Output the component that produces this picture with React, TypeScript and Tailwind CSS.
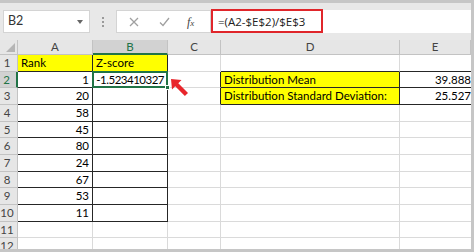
import React from 'react';

const GRID = 'border-[#dadada]';
const DARK = 'border-[#262626]';

type Row = {
  a?: string;
  b?: string;
  d?: string;
  e?: string;
};

const rows: Row[] = [
  { a: 'Rank', b: 'Z-score' },
  { a: '1', b: '-1.523410327', d: 'Distribution Mean', e: '39.888' },
  { a: '20', d: 'Distribution Standard Deviation:', e: '25.527' },
  { a: '58' },
  { a: '45' },
  { a: '80' },
  { a: '24' },
  { a: '67' },
  { a: '53' },
  { a: '11' },
  {},
  {},
];

const ColHeader = ({ label, active }: { label: string; active?: boolean }) => (
  <div
    className={
      active
        ? 'flex items-center justify-center border-r border-b-2 border-r-[#c3c3c3] border-b-[#217346] bg-[#d2d2d2] text-[#217346]'
        : 'flex items-center justify-center border-r border-b border-[#c3c3c3] bg-[#e6e6e6] text-[#444]'
    }
  >
    {label}
  </div>
);

const FormulaBar = () => (
  <div className="flex h-[37px] items-start bg-[#e8e8e8] pt-[7px]">
    <div className="ml-[3px] flex h-[23px] w-[87px] items-center justify-between border border-[#d4d4d4] bg-white pl-[4px] pr-[6px] text-[12.5px] text-[#333]">
      <span>B2</span>
      <span className="mt-[1px] h-0 w-0 border-x-[3.5px] border-t-[4px] border-x-transparent border-t-[#666]" />
    </div>
    <div className="flex h-[23px] w-[26px] flex-col items-center justify-center gap-[2px]">
      <span className="h-[2px] w-[2px] bg-[#9a9a9a]" />
      <span className="h-[2px] w-[2px] bg-[#9a9a9a]" />
      <span className="h-[2px] w-[2px] bg-[#9a9a9a]" />
    </div>
    <div className="flex h-[23px] w-[95px] items-center border border-[#d4d4d4] bg-white">
      <svg className="ml-[12px]" width="10" height="10" viewBox="0 0 10 10">
        <path d="M1 1 L9 9 M9 1 L1 9" stroke="#a0a0a0" strokeWidth="1.3" />
      </svg>
      <svg className="ml-[20px]" width="11" height="10" viewBox="0 0 11 10">
        <path d="M1 5.5 L4 8.5 L10 1" stroke="#a0a0a0" strokeWidth="1.3" fill="none" />
      </svg>
      <span className="ml-[17px] font-['Liberation_Serif'] text-[12px] italic text-[#444]">
        f<span className="text-[9px]">x</span>
      </span>
    </div>
    <div className="relative flex h-[23px] flex-1 items-center bg-white">
      <div className="absolute left-0 top-[-1px] h-[24px] w-[112px] border-2 border-[#e0262b]" />
      <span className="pl-[7px] font-['Open_Sans'] text-[11.5px] text-[#222]">=(A2-$E$2)/$E$3</span>
    </div>
  </div>
);

const Cell = ({
  children,
  className,
}: {
  children?: React.ReactNode;
  className: string;
}) => <div className={className}>{children}</div>;

export default function App() {
  return (
    <div className="flex h-[252px] w-[474px] overflow-hidden bg-[#c6c6c6] font-['Lato'] text-[11.5px] leading-none">
      <div className="flex w-[471px] flex-col">
        <div className="h-[3px] bg-[#c6c6c6]" />
        <FormulaBar />
        <div className="relative h-[209px] overflow-hidden bg-white">
          <div className="grid grid-cols-[18px_75px_75px_53px_179px_71px] grid-rows-[15px_repeat(12,16.667px)]">
            <div className="relative border-r border-b border-[#c3c3c3] bg-[#e6e6e6]">
              <svg className="absolute bottom-[2px] right-[2px]" width="9" height="9" viewBox="0 0 9 9">
                <path d="M9 0 L9 9 L0 9 Z" fill="#b5b5b5" />
              </svg>
            </div>
            <ColHeader label="A" />
            <ColHeader label="B" active />
            <ColHeader label="C" />
            <ColHeader label="D" />
            <ColHeader label="E" />

            {rows.map((r, i) => {
              const n = i + 1;
              const inAB = n <= 10;
              const inDE = n === 2 || n === 3;
              return (
                <React.Fragment key={n}>
                  <div
                    className={
                      n === 2
                        ? 'flex items-center justify-center border-r-2 border-b border-r-[#217346] border-b-[#c3c3c3] bg-[#d2d2d2] pr-[3px] text-[#217346]'
                        : 'flex items-center justify-center border-r border-b border-[#c3c3c3] bg-[#e6e6e6] pr-[3px] text-[#444]'
                    }
                  >
                    {n}
                  </div>
                  <Cell
                    className={
                      n === 1
                        ? `flex items-center border-r border-b ${DARK} bg-[#ffff00] pl-[3px] text-black`
                        : inAB
                          ? `flex items-center justify-end border-r border-b ${DARK} pr-[3px] text-black`
                          : `border-r border-b ${GRID}`
                    }
                  >
                    {r.a}
                  </Cell>
                  <Cell
                    className={
                      n === 1
                        ? `flex items-center border-r border-b ${DARK} bg-[#ffff00] pl-[3px] text-black`
                        : n === 2
                          ? `relative flex items-center justify-end border-r border-b ${DARK} pr-[3px] tracking-[-0.5px] text-black`
                          : inAB
                            ? `border-r border-b ${DARK}`
                            : `border-r border-b ${GRID}`
                    }
                  >
                    {r.b}
                    {n === 2 && (
                      <>
                        <span className="absolute inset-[-1px] border-2 border-[#217346]" />
                        <span className="absolute bottom-[-3px] right-[-3px] h-[5px] w-[5px] border border-white bg-[#217346]" />
                      </>
                    )}
                  </Cell>
                  <Cell className={inDE ? `border-r border-b border-r-[#262626] border-b-[#dadada]` : `border-r border-b ${GRID}`} />
                  <Cell
                    className={
                      inDE
                        ? `flex items-center whitespace-nowrap border-r border-b ${DARK} bg-[#ffff00] pl-[3px] text-black`
                        : n === 1
                          ? `border-r border-b border-r-[#dadada] border-b-[#262626]`
                          : `border-r border-b ${GRID}`
                    }
                  >
                    {r.d}
                  </Cell>
                  <Cell
                    className={
                      inDE
                        ? `flex items-center justify-end border-b ${DARK} text-black`
                        : n === 1
                          ? `border-b border-b-[#262626]`
                          : `border-b ${GRID}`
                    }
                  >
                    {r.e}
                  </Cell>
                </React.Fragment>
              );
            })}
          </div>
          <svg className="absolute left-[169px] top-[37px]" width="21" height="21" viewBox="0 0 21 21">
            <path d="M2 2 L12.5 3 L9.3 6.2 L19 15.9 L15.9 19 L6.2 9.3 L3 12.5 Z" fill="#e8252b" />
          </svg>
        </div>
        <div className="h-[3px] bg-[#c6c6c6]" />
      </div>
    </div>
  );
}
